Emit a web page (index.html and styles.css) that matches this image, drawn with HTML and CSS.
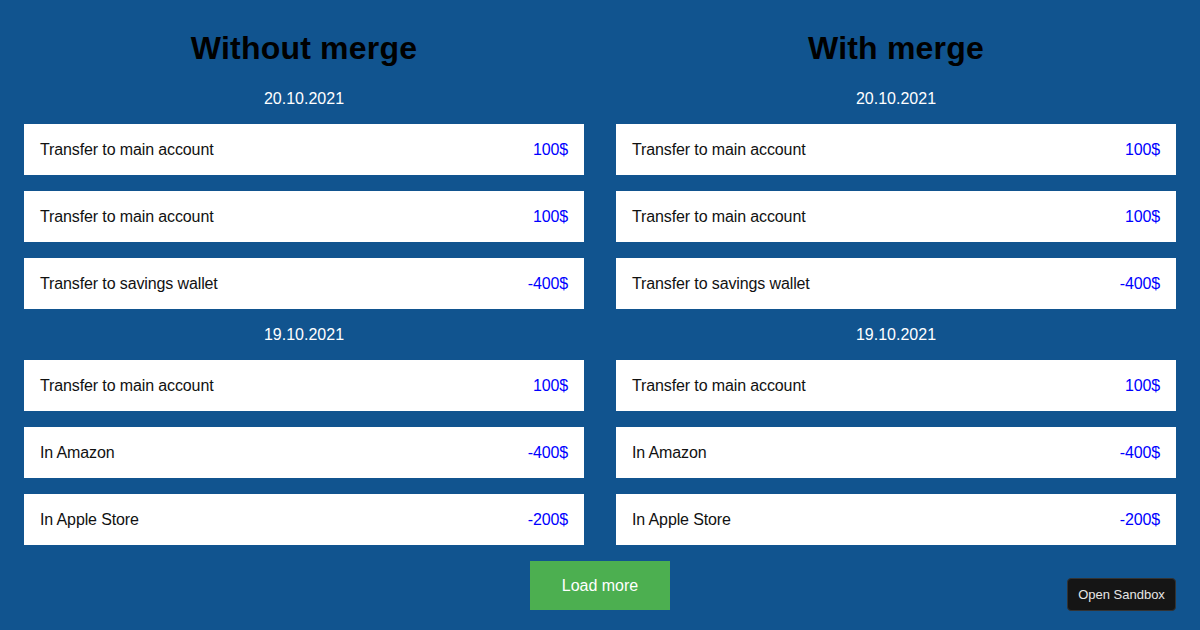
FILE: index.html
```html
<!DOCTYPE html>
<html>
<head>
<meta charset="utf-8">
<link rel="stylesheet" href="styles.css">
</head>
<body>
<div class="page">
  <div class="columns">
    <section class="column">
      <h1 class="title">Without merge</h1>
      <div class="date">20.10.2021</div>
      <div class="row"><span>Transfer to main account</span><span class="amount">100$</span></div>
      <div class="row"><span>Transfer to main account</span><span class="amount">100$</span></div>
      <div class="row"><span>Transfer to savings wallet</span><span class="amount">-400$</span></div>
      <div class="date">19.10.2021</div>
      <div class="row"><span>Transfer to main account</span><span class="amount">100$</span></div>
      <div class="row"><span>In Amazon</span><span class="amount">-400$</span></div>
      <div class="row"><span>In Apple Store</span><span class="amount">-200$</span></div>
    </section>
    <section class="column">
      <h1 class="title">With merge</h1>
      <div class="date">20.10.2021</div>
      <div class="row"><span>Transfer to main account</span><span class="amount">100$</span></div>
      <div class="row"><span>Transfer to main account</span><span class="amount">100$</span></div>
      <div class="row"><span>Transfer to savings wallet</span><span class="amount">-400$</span></div>
      <div class="date">19.10.2021</div>
      <div class="row"><span>Transfer to main account</span><span class="amount">100$</span></div>
      <div class="row"><span>In Amazon</span><span class="amount">-400$</span></div>
      <div class="row"><span>In Apple Store</span><span class="amount">-200$</span></div>
    </section>
  </div>
  <div class="actions">
    <button class="load-more">Load more</button>
  </div>
  <button class="sandbox">Open Sandbox</button>
</div>
</body>
</html>
```
FILE: styles.css
```css
html, body {
  margin: 0;
  padding: 0;
  height: 100%;
}
body {
  background: #11548f;
  font-family: "Liberation Sans", Arial, Helvetica, sans-serif;
  color: #000;
  overflow: hidden;
}
.page {
  position: relative;
  height: 630px;
  padding-top: 30px;
  box-sizing: border-box;
}
.columns {
  display: flex;
  gap: 32px;
  padding: 0 24px;
}
.column {
  flex: 1;
  display: flex;
  flex-direction: column;
  gap: 16px;
}
.title {
  margin: 0 0 6px;
  font-size: 32px;
  line-height: 37px;
  font-weight: bold;
  text-align: center;
  color: #000;
  letter-spacing: 0.2px;
}
.date {
  color: #fff;
  font-size: 16px;
  line-height: 19px;
  text-align: center;
}
.row {
  height: 51px;
  background: #fff;
  display: flex;
  align-items: center;
  justify-content: space-between;
  padding: 0 16px;
  font-size: 16px;
  color: #111;
  letter-spacing: -0.12px;
}
.amount {
  color: #0000ff;
}
.actions {
  display: flex;
  justify-content: center;
  margin-top: 16px;
}
.load-more {
  width: 140px;
  height: 49px;
  border: none;
  background: #4caf50;
  color: #fff;
  font-family: "Liberation Sans", Arial, sans-serif;
  font-size: 16px;
  padding: 0;
}
.sandbox {
  position: absolute;
  right: 24px;
  bottom: 19px;
  width: 109px;
  height: 33px;
  background: #151515;
  color: #e6e6e6;
  border: 1px solid #333;
  border-radius: 4px;
  font-family: "Liberation Sans", Arial, sans-serif;
  font-size: 13px;
  padding: 0;
}
```
